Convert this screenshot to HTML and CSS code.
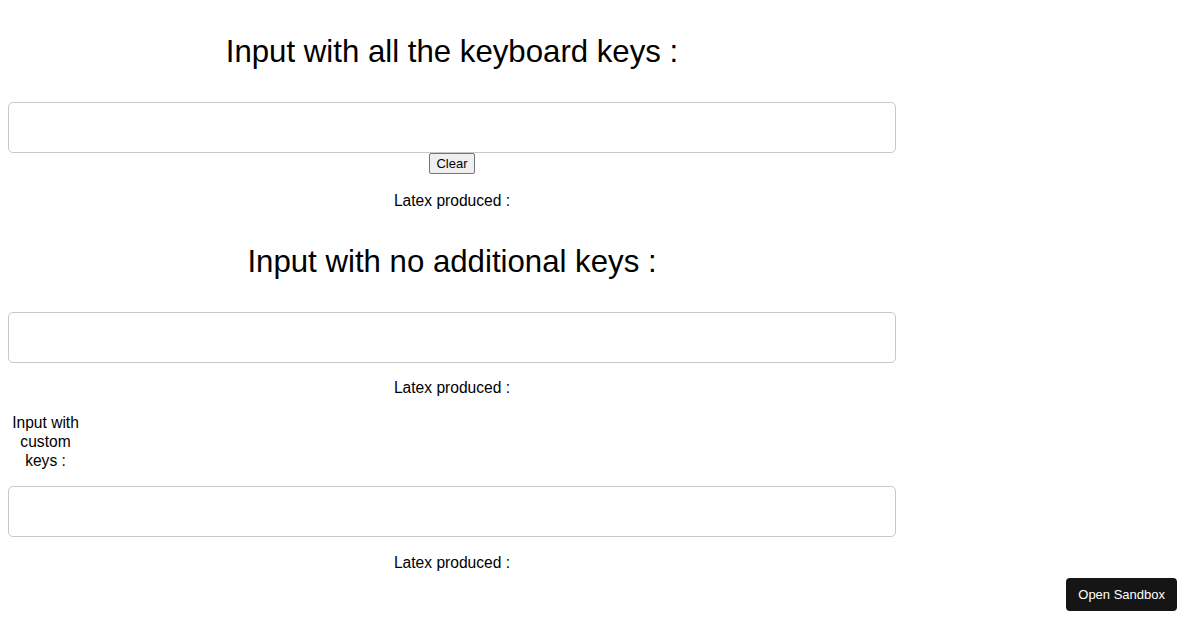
FILE: index.html
```html
<!DOCTYPE html>
<html>
<head>
<meta charset="utf-8">
<link rel="stylesheet" href="styles.css">
</head>
<body>
<div class="container">
  <section class="block">
    <h1 class="title">Input with all the keyboard keys :</h1>
    <div class="math-input"></div>
    <button class="clear-btn">Clear</button>
    <p class="latex">Latex produced :</p>
  </section>
  <section class="block">
    <h1 class="title title-second">Input with no additional keys :</h1>
    <div class="math-input"></div>
    <p class="latex">Latex produced :</p>
  </section>
  <section class="block">
    <div class="small-label">Input with custom keys :</div>
    <div class="math-input"></div>
    <p class="latex latex-last">Latex produced :</p>
  </section>
</div>
<a class="sandbox-btn">Open Sandbox</a>
</body>
</html>
```
FILE: styles.css
```css
html, body {
  background: #fff;
}
body {
  margin: 8px;
  font-family: "Liberation Sans", Arial, sans-serif;
  color: #000;
}
.container {
  width: 888px;
  text-align: center;
}
.block {
  display: flex;
  flex-direction: column;
  align-items: center;
}
.title {
  font-size: 31.2px;
  font-weight: normal;
  margin: 25px 0 32px;
  line-height: 37px;
}
.title-second {
  margin-top: 17px;
}
.math-input {
  align-self: stretch;
  height: 49px;
  border: 1px solid #c8c8c8;
  border-radius: 5px;
  box-sizing: content-box;
}
.clear-btn {
  font-family: "Liberation Sans", Arial, sans-serif;
  font-size: 13px;
  padding: 2px 6px;
  height: 21px;
  margin-bottom: 2px;
  border: 1px solid #767676;
  border-radius: 2px;
  background: #efefef;
  color: #000;
}
.latex {
  font-size: 15.6px;
  line-height: 18px;
  margin: 16px 0;
}
.latex-last {
  margin-top: 17px;
}
.small-label {
  align-self: flex-start;
  width: 75px;
  font-size: 15.6px;
  line-height: 19px;
  margin: 0 0 16px;
}
.sandbox-btn {
  position: fixed;
  right: 23px;
  bottom: 19px;
  background: #151515;
  color: #fff;
  font-family: "Liberation Sans", Arial, sans-serif;
  font-size: 13px;
  padding: 9px 12px;
  border-radius: 4px;
  line-height: 15px;
}
```
